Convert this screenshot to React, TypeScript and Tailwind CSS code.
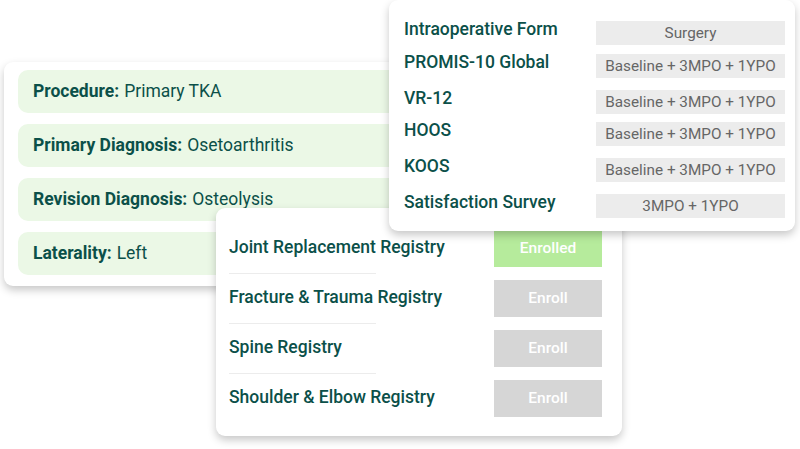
import React from 'react';

const details = [
    { label: 'Procedure:', value: 'Primary TKA' },
    { label: 'Primary Diagnosis:', value: 'Osetoarthritis' },
    { label: 'Revision Diagnosis:', value: 'Osteolysis' },
    { label: 'Laterality:', value: 'Left' },
];

const forms = [
    { name: 'Intraoperative Form', schedule: 'Surgery', gap: 'mt-0' },
    { name: 'PROMIS-10 Global', schedule: 'Baseline + 3MPO + 1YPO', gap: 'mt-[9px]' },
    { name: 'VR-12', schedule: 'Baseline + 3MPO + 1YPO', gap: 'mt-[12px]' },
    { name: 'HOOS', schedule: 'Baseline + 3MPO + 1YPO', gap: 'mt-[8px]' },
    { name: 'KOOS', schedule: 'Baseline + 3MPO + 1YPO', gap: 'mt-[12px]' },
    { name: 'Satisfaction Survey', schedule: '3MPO + 1YPO', gap: 'mt-[12px]' },
];

const registries = [
    { name: 'Joint Replacement Registry', enrolled: true },
    { name: 'Fracture & Trauma Registry', enrolled: false },
    { name: 'Spine Registry', enrolled: false },
    { name: 'Shoulder & Elbow Registry', enrolled: false },
];

const cardShadow = 'shadow-[0_4px_8px_rgba(0,0,0,0.22)]';

export default function App() {
    return (
        <div
            className="relative w-[800px] h-[449px] bg-white overflow-hidden text-[#0b5049]"
            style={{ fontFamily: 'Roboto, "Noto Sans", sans-serif' }}
        >
            {/* Case details */}
            <div className={`absolute left-[4px] top-[62px] w-[400px] h-[224px] bg-white rounded-[9px] ${cardShadow} pl-[14px] pt-[8px] flex flex-col gap-[11px]`}>
                {details.map((d) => (
                    <div key={d.label} className="h-[43px] w-[420px] rounded-[10px] bg-[#ebf8e6] flex items-center pl-[15px] text-[17.5px]">
                        <span className="font-bold">{d.label}</span>
                        <span className="ml-[5px]">{d.value}</span>
                    </div>
                ))}
            </div>

            {/* Registries */}
            <div className={`absolute left-[216px] top-[208px] w-[406px] h-[228px] bg-white rounded-[9px] ${cardShadow} pl-[13px] pr-[20px] pt-[22px]`}>
                {registries.map((r, i) => (
                    <div key={r.name}>
                        <div className="h-[37px] flex items-center justify-between">
                            <span className="text-[17.5px] font-medium -translate-y-[1px]">{r.name}</span>
                            <div
                                className={`w-[108px] h-[37px] flex items-center justify-center text-[15.5px] font-medium text-white ${r.enrolled ? 'bg-[#b6eb9c]' : 'bg-[#d6d6d6]'}`}
                            >
                                {r.enrolled ? 'Enrolled' : 'Enroll'}
                            </div>
                        </div>
                        {i < registries.length - 1 && (
                            <div className="h-[13px] flex items-center">
                                <div className="w-[147px] h-px bg-[#ececec]" />
                            </div>
                        )}
                    </div>
                ))}
            </div>

            {/* Forms */}
            <div className={`absolute left-[389px] top-0 w-[406px] h-[231px] bg-white rounded-[9px] ${cardShadow} pl-[15px] pr-[10px] pt-[21px]`}>
                {forms.map((f) => (
                    <div key={f.name} className={`h-[24px] flex items-center justify-between ${f.gap}`}>
                        <span className="text-[17.5px] font-medium leading-none -translate-y-[3px]">{f.name}</span>
                        <div className="w-[189px] h-[24px] bg-[#ececec] flex items-center justify-center text-[15.3px] text-[#666666]">
                            {f.schedule}
                        </div>
                    </div>
                ))}
            </div>
        </div>
    );
}
